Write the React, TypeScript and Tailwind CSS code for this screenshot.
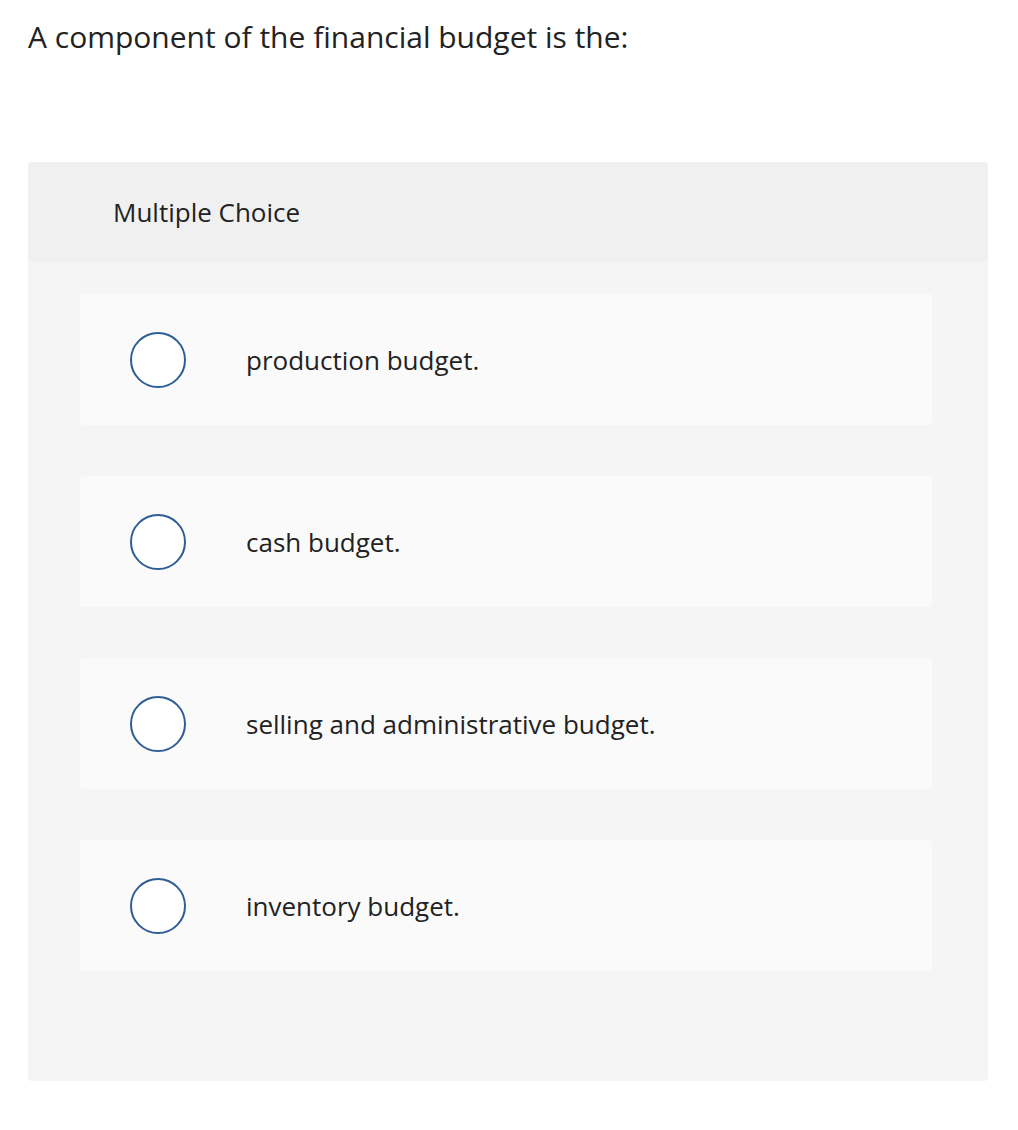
const options = [
  'production budget.',
  'cash budget.',
  'selling and administrative budget.',
  'inventory budget.',
]

export default function App() {
  return (
    <div
      className="min-h-screen bg-white px-[28px] pt-[17px] text-[#222222] [font-variant-ligatures:none]"
      style={{ fontFamily: '"Open Sans", Lato, Arial, sans-serif' }}
    >
      <h1 className="text-[30px] leading-[40px] font-normal">A component of the financial budget is the:</h1>

      <div className="mt-[105px] w-[960px] overflow-hidden rounded-[4px] bg-[#f5f5f5]">
        {/* Header */}
        <div className="flex h-[100px] items-center bg-[#f0f0f0] pl-[85px]">
          <span className="text-[26px] leading-none">Multiple Choice</span>
        </div>

        {/* Options */}
        <div className="flex flex-col gap-[51px] pl-[52px] pr-[56px] pt-[32px] pb-[110px]">
          {options.map((opt) => (
            <label
              key={opt}
              className="flex h-[131px] cursor-pointer items-center rounded-[4px] bg-[#fafafa] pl-[50px]"
            >
              <span className="h-[56px] w-[56px] shrink-0 rounded-full border-2 border-[#2f5d95] bg-white" />
              <span className="ml-[60px] text-[26px] leading-none">{opt}</span>
            </label>
          ))}
        </div>
      </div>
    </div>
  )
}
